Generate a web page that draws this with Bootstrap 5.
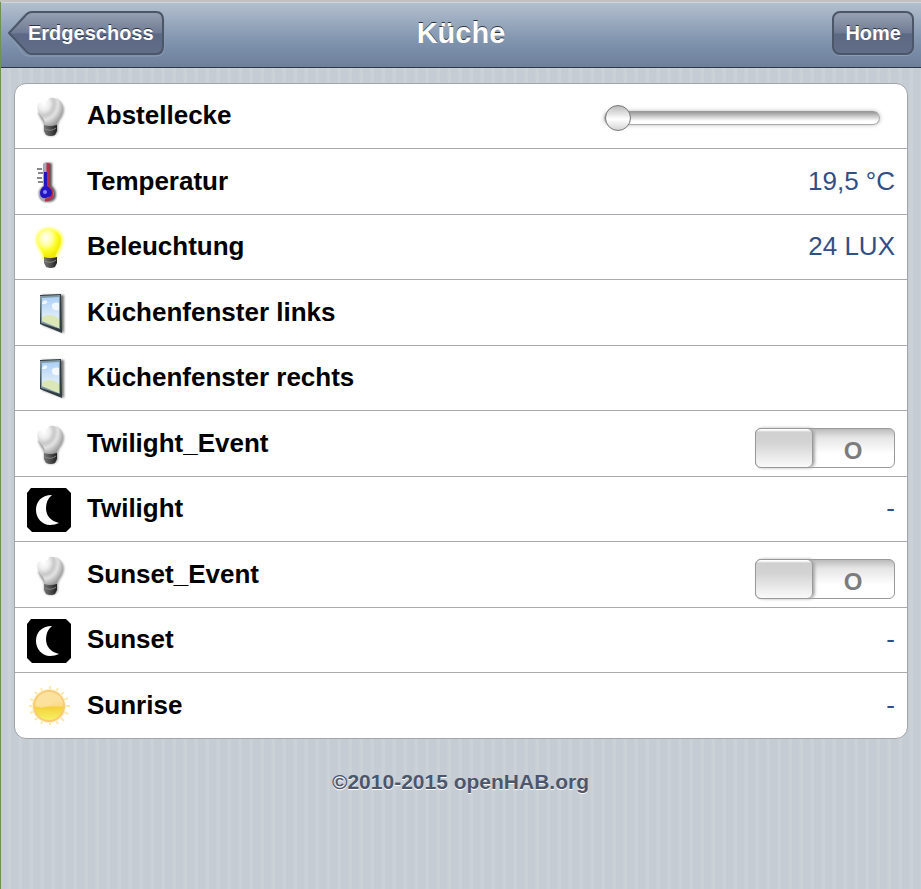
<!DOCTYPE html>
<html lang="de">
<head>
<meta charset="utf-8">
<meta name="viewport" content="width=device-width, initial-scale=1">
<title>Küche</title>
<link href="https://cdn.jsdelivr.net/npm/bootstrap@5.3.0/dist/css/bootstrap.min.css" rel="stylesheet">
<style>
body{font-family:"Liberation Sans",Arial,sans-serif;color:#000;border-top:2px solid #c3c2c0;
 background:repeating-linear-gradient(90deg,#c5ccd3 0 7px,#cad1d7 8px 11px)}
.screen{border-left:1px solid #6c9450}
.topbar{height:66px;padding:0 7px 4px 7px;border-top:1px solid #cdd5df;border-bottom:1px solid #2d3642;background:linear-gradient(#b3bfce,#889bb3 50%,#7d91ac 65%,#6d7f9b)}
.topbar h1{font-size:29px;line-height:36px;font-weight:700;color:#fff;text-shadow:0 -1px 0 #2c3440}
.navbtn{position:relative;height:44px;font-size:20px;line-height:24px;font-weight:700;color:#fff;text-decoration:none;text-shadow:0 -1px 0 #2c3440}
.navbtn.home{padding:8px 11px;border:2px solid #4c5669;border-radius:8px;background:linear-gradient(#98a1b3,#6f7b93 50%,#5c6984 52%,#626d87);box-shadow:0 1px 0 #8d9db4}
.navbtn.back{width:157px;padding:10px 0 0 20px}
.navbtn.back svg{position:absolute;left:0;top:0;width:100%;height:46px}
.navbtn.back span{position:relative}
.panel{margin:15px 13px 0 13px;border:1px solid #a0a5aa;border-radius:12px;background:#fff}
.item{height:65px;padding:0 12px 0 11px;border-bottom:1px solid #a7aaae}
.item:nth-child(even){height:66px}
.item:last-child{border-bottom:0;height:65px}
.item>svg{width:46px;height:46px;flex:none;margin-top:2px}
.item .name{font-size:26px;line-height:32px;font-weight:700;margin-left:15px;padding-bottom:2px}
.item .value{font-size:26px;line-height:32px;color:#324f85;padding-bottom:2px}
.dim{-webkit-appearance:none;appearance:none;width:276px;height:28px;margin:4px 15px 0 0;background:none}
.dim::-webkit-slider-runnable-track{height:14px;border:1px solid #aaa;border-top-color:#999;border-radius:7px;background:linear-gradient(#999,#ddd 50%,#fff 75%);box-shadow:0 0 4px #bbb}
.dim::-webkit-slider-thumb{-webkit-appearance:none;width:26px;height:26px;margin-top:-7px;border:1px solid #777;border-radius:50%;background:linear-gradient(#bbb,#fff 55%,#d4d4d4)}
.toggle{-webkit-appearance:none;appearance:none;width:140px;height:40px;padding:0;border:1px solid #999;border-radius:6px;background:linear-gradient(#bbb,#e5e5e5 22%,#fff 65%);margin-top:8px;color:#7c7c7c;font-weight:700;font-size:24px;line-height:40px}
.toggle .knob{width:58px;height:40px;margin:-1px;border:1px solid #999;border-radius:6px;background:linear-gradient(#fff 0 1px,#d0d0d0 3px,#d3d3d3 35%,#fafafa);box-shadow:2px 0 3px #aaa}
.toggle .state{padding-top:6px}
.copy{font-size:21px;line-height:24px;font-weight:700;color:#4c566c;margin-top:31px;padding-right:1px;text-shadow:0 1px 0 #fff}
</style>
</head>
<body>
<svg width="0" height="0" class="position-absolute" aria-hidden="true">
<defs>
<radialGradient id="gGray" cx=".25" cy=".2" r=".9"><stop offset="0" stop-color="#fff"/><stop offset=".25" stop-color="#eee"/><stop offset=".45" stop-color="#c8c8c8"/><stop offset=".62" stop-color="#e2e2e2"/><stop offset="1" stop-color="#888"/></radialGradient>
<radialGradient id="gYel" cx=".35" cy=".28" r=".7"><stop offset="0" stop-color="#fff"/><stop offset=".4" stop-color="#ffffa0"/><stop offset=".65" stop-color="#fcfc28"/><stop offset="1" stop-color="#eee900"/></radialGradient>
<linearGradient id="gBase"><stop offset="0" stop-color="#777"/><stop offset=".4" stop-color="#555"/><stop offset="1" stop-color="#222"/></linearGradient>
<linearGradient id="gSky" x2="0" y2="1"><stop offset="0" stop-color="#acd0f6"/><stop offset=".6" stop-color="#dbeafa"/><stop offset="1" stop-color="#dbeafa"/></linearGradient>
<linearGradient id="gSun" x2="0" y2="1"><stop offset="0" stop-color="#fce5ad"/><stop offset=".48" stop-color="#fbdc87"/><stop offset=".55" stop-color="#f5d13c"/><stop offset="1" stop-color="#f4f568"/></linearGradient>
<linearGradient id="gBack" x2="0" y2="1"><stop offset="0" stop-color="#98a1b3"/><stop offset=".5" stop-color="#6f7b93"/><stop offset=".52" stop-color="#5c6984"/><stop offset="1" stop-color="#626d87"/></linearGradient>
<filter id="soft" x="-30%" y="-30%" width="160%" height="160%"><feGaussianBlur stdDeviation="1"/></filter>
<filter id="fine"><feGaussianBlur stdDeviation=".6"/></filter>
<symbol id="bulb" viewBox="0 0 46 46">
<path d="M30 5Q37 8 38 15Q38 21 34 26Q31 30 32 36Q31 42 25 42Q19 42 18 36Q19 29 15 25L12 19Z" fill="#999" filter="url(#soft)"/>
<path d="M12 10C14 7 18 10 20 8C23 6 22 3 27 4C33 5 37 10 37 15C37 22 31 25 30 33H19C19 27 18 25 15 22C12 18 10 13 12 10Z" fill="url(#gGray)" filter="url(#fine)"/>
<path d="M18 31Q24 33 31 31V37L29 41Q25 43 20 41L18 37Z" fill="url(#gBase)" filter="url(#fine)"/><path d="M19 35Q25 38 30 34" stroke="#888" fill="none"/>
</symbol>
<symbol id="bulbon" viewBox="0 0 46 46">
<path d="M11 15C11 8 17 4 23 4S36 8 36 15C36 23 31 26 30 33H18C17 26 11 22 11 15Z" fill="#ffff35" stroke="#ffff70" stroke-width="3" filter="url(#soft)"/>
<path d="M12 15C12 9 17 5 23 5S35 9 35 15C35 23 30 26 29 33H18C18 26 12 23 12 15Z" fill="url(#gYel)"/>
<path d="M18 32Q24 34 31 32V38L29 42Q25 44 20 42L18 38Z" fill="url(#gBase)" filter="url(#fine)"/><path d="M19 36Q25 39 30 35" stroke="#888" fill="none"/>
</symbol>
<symbol id="thermo" viewBox="0 0 46 46">
<path d="M19 3H26V26Q30 29 30 35Q30 42 22 42T13 34Q13 29 18 26Z" fill="#555" filter="url(#soft)"/>
<g filter="url(#fine)"><path d="M17 4Q20 1 23 4V26Q28 29 28 34Q27 41 20 41T13 34Q13 29 17 26Z" fill="#aaa5b5"/><path d="M22 3V27Q27 30 26 35Q25 40 19 40" fill="none" stroke="#b82f46" stroke-width="3"/>
<path d="M18 12H21V26Q26 29 26 33T20 38T14 33Q14 29 18 26Z" fill="#2415bd"/><circle cx="19" cy="32" r="2" fill="#8d82ff"/><path d="M11 9H16M12 13H17M11 18H16M12 22H17" stroke="#888" stroke-width="2"/></g>
</symbol>
<symbol id="window" viewBox="0 0 46 46">
<path d="M16 4L38 4V42L16 34Z" fill="#777" filter="url(#soft)"/><g filter="url(#fine)"><path d="M14 4L35 3L36 42L14 33Z" fill="#303b40"/><path d="M14 5L34 4V38L15 32Z" fill="#8199a4"/>
<path d="M16 7L33 6V37L16 30Z" fill="url(#gSky)"/><path d="M16 26Q25 21 33 28V37L16 30Z" fill="#dce7b8"/><path d="M16 12Q18 8 21 10Q22 12 19 13H16M26 16Q25 13 28 12Q30 11 33 12V19Q27 20 26 16" fill="#fff" opacity=".8"/></g>
</symbol>
<symbol id="moon" viewBox="0 0 46 46"><path d="M5 1H40L45 6V40L40 45H6L1 40V6Z" fill="#000"/><path d="M26 8C15 8 10 15 10 23S16 38 24 38Q29 38 33 36C25 34 20 29 20 21Q20 13 26 8Z" fill="#fff" filter="url(#fine)"/></symbol>
<symbol id="sun" viewBox="0 0 46 46">
<path d="M24 2V8M24 36V41M3 22H8M38 22H44M9 8L13 12M34 33L38 37M9 36L13 32M34 12L38 8M15 4L17 9M30 36L32 40M4 29L9 27M37 16L42 14M32 4L29 9M15 40L17 36M4 15L9 17M38 28L42 30" stroke="#fae6a0" opacity=".8" stroke-width="2" filter="url(#fine)"/>
<circle cx="23" cy="22" r="17" fill="#fdf0c8" filter="url(#fine)"/><circle cx="23" cy="22" r="15" fill="url(#gSun)" stroke="#f9cb75" stroke-width="2"/><path d="M9 22Q16 26 24 21T37 19Q34 8 23 8T9 22Z" fill="#fce1a0" opacity=".75"/>
</symbol>
</defs>
</svg>
<div class="screen min-vh-100">
<header class="topbar d-flex justify-content-between align-items-center position-relative">
<a href="#" class="navbtn back"><svg viewBox="0 0 157 46" preserveAspectRatio="none" aria-hidden="true"><path d="M20 2H148Q156 2 156 10V37Q156 45 148 45H20Q16 45 13 40L2 23L13 7Q16 2 20 2Z" fill="none" stroke="#8d9db4"/><path d="M24 1H148Q155 1 155 9V35Q155 43 148 43H24Q20 43 17 39L1 22L17 5Q20 1 24 1Z" fill="url(#gBack)" stroke="#4c5669" stroke-width="2"/></svg><span>Erdgeschoss</span></a>
<h1 class="position-absolute start-50 translate-middle-x m-0">Küche</h1>
<a href="#" class="navbtn home">Home</a>
</header>
<main>
<div class="panel">
<div class="item d-flex align-items-center"><svg aria-hidden="true"><use href="#bulb"/></svg><label class="name me-auto" for="dim">Abstellecke</label><input id="dim" class="dim" type="range" min="0" max="100" value="0"></div>
<div class="item d-flex align-items-center"><svg aria-hidden="true"><use href="#thermo"/></svg><span class="name me-auto">Temperatur</span><span class="value">19,5 °C</span></div>
<div class="item d-flex align-items-center"><svg aria-hidden="true"><use href="#bulbon"/></svg><span class="name me-auto">Beleuchtung</span><span class="value">24 LUX</span></div>
<div class="item d-flex align-items-center"><svg aria-hidden="true"><use href="#window"/></svg><span class="name me-auto">Küchenfenster links</span></div>
<div class="item d-flex align-items-center"><svg aria-hidden="true"><use href="#window"/></svg><span class="name me-auto">Küchenfenster rechts</span></div>
<div class="item d-flex align-items-center"><svg aria-hidden="true"><use href="#bulb"/></svg><label class="name me-auto" id="twl" for="tw">Twilight_Event</label><button id="tw" type="button" role="switch" aria-checked="false" aria-labelledby="twl" class="toggle d-flex"><span class="knob flex-shrink-0"></span><span class="state flex-grow-1 lh-1 align-self-center">O</span></button></div>
<div class="item d-flex align-items-center"><svg aria-hidden="true"><use href="#moon"/></svg><span class="name me-auto">Twilight</span><span class="value">-</span></div>
<div class="item d-flex align-items-center"><svg aria-hidden="true"><use href="#bulb"/></svg><label class="name me-auto" id="ssl" for="ss">Sunset_Event</label><button id="ss" type="button" role="switch" aria-checked="false" aria-labelledby="ssl" class="toggle d-flex"><span class="knob flex-shrink-0"></span><span class="state flex-grow-1 lh-1 align-self-center">O</span></button></div>
<div class="item d-flex align-items-center"><svg aria-hidden="true"><use href="#moon"/></svg><span class="name me-auto">Sunset</span><span class="value">-</span></div>
<div class="item d-flex align-items-center"><svg aria-hidden="true"><use href="#sun"/></svg><span class="name me-auto">Sunrise</span><span class="value">-</span></div>
</div>
</main>
<footer class="copy text-center">©2010-2015 openHAB.org</footer>
</div>
<script src="https://cdn.jsdelivr.net/npm/bootstrap@5.3.0/dist/js/bootstrap.bundle.min.js"></script>
</body>
</html>
